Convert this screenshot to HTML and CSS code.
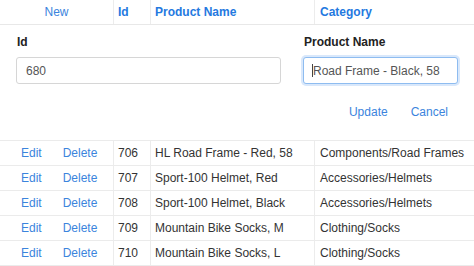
FILE: index.html
```html
<!DOCTYPE html>
<html>
<head>
<meta charset="utf-8">
<link rel="stylesheet" href="styles.css">
</head>
<body>
<div class="grid">
  <div class="row head">
    <div class="cell c1 center"><a class="link">New</a></div>
    <div class="cell c2"><b class="hlink">Id</b></div>
    <div class="cell c3"><b class="hlink">Product Name</b></div>
    <div class="cell c4"><b class="hlink">Category</b></div>
  </div>
  <div class="editor">
    <div class="fields">
      <div class="field">
        <label class="label">Id</label>
        <input class="input" value="680">
      </div>
      <div class="field">
        <label class="label">Product Name</label>
        <div class="input-wrap">
          <input class="input focus" value="Road Frame - Black, 58">
          <span class="caret"></span>
        </div>
      </div>
    </div>
    <div class="actions">
      <a class="link btn">Update</a>
      <a class="link btn">Cancel</a>
    </div>
  </div>
  <div class="body">
    <div class="row">
      <div class="cell c1 acts"><a class="link">Edit</a><a class="link">Delete</a></div>
      <div class="cell c2">706</div>
      <div class="cell c3">HL Road Frame - Red, 58</div>
      <div class="cell c4">Components/Road Frames</div>
    </div>
    <div class="row">
      <div class="cell c1 acts"><a class="link">Edit</a><a class="link">Delete</a></div>
      <div class="cell c2">707</div>
      <div class="cell c3">Sport-100 Helmet, Red</div>
      <div class="cell c4">Accessories/Helmets</div>
    </div>
    <div class="row">
      <div class="cell c1 acts"><a class="link">Edit</a><a class="link">Delete</a></div>
      <div class="cell c2">708</div>
      <div class="cell c3">Sport-100 Helmet, Black</div>
      <div class="cell c4">Accessories/Helmets</div>
    </div>
    <div class="row">
      <div class="cell c1 acts"><a class="link">Edit</a><a class="link">Delete</a></div>
      <div class="cell c2">709</div>
      <div class="cell c3">Mountain Bike Socks, M</div>
      <div class="cell c4">Clothing/Socks</div>
    </div>
    <div class="row">
      <div class="cell c1 acts"><a class="link">Edit</a><a class="link">Delete</a></div>
      <div class="cell c2">710</div>
      <div class="cell c3">Mountain Bike Socks, L</div>
      <div class="cell c4">Clothing/Socks</div>
    </div>
  </div>
</div>
</body>
</html>
```
FILE: styles.css
```css
html, body {
  margin: 0;
  padding: 0;
  background: #fff;
}
body {
  font-family: "Liberation Sans", Arial, sans-serif;
  font-size: 12px;
  color: #333;
  width: 474px;
  height: 266px;
  overflow: hidden;
}
.row {
  display: grid;
  grid-template-columns: 113px 37px 164px 1fr;
  height: 25px;
  border-bottom: 1px solid #ebebeb;
  box-sizing: border-box;
}
.row.head {
  border-bottom: 1px solid #e8e8e8;
}
.cell {
  display: flex;
  align-items: center;
  padding-left: 4px;
  border-left: 1px solid #ececec;
  box-sizing: border-box;
  white-space: nowrap;
}
.cell.c1 {
  border-left: none;
  padding-left: 0;
}
.center {
  justify-content: center;
}
.cell.c4 {
  padding-left: 5px;
}
.link {
  color: #3b84dd;
  text-decoration: none;
}
.hlink {
  color: #2479e0;
  font-weight: bold;
}
.cell.c1.acts {
  padding-left: 21px;
  gap: 21px;
}
.editor {
  height: 115px;
  box-sizing: border-box;
  padding: 10px 0 0 16px;
}
.fields {
  display: grid;
  grid-template-columns: 265px 155px;
  column-gap: 22px;
}
.field {
  display: flex;
  flex-direction: column;
}
.label {
  font-weight: bold;
  color: #222;
  height: 14px;
  line-height: 14px;
  margin-left: 1px;
  margin-bottom: 8px;
}
.input-wrap {
  position: relative;
  display: flex;
  flex-direction: column;
}
.input {
  font-family: "Liberation Sans", Arial, sans-serif;
  font-size: 12px;
  color: #555;
  height: 27px;
  box-sizing: border-box;
  border: 1px solid #d6d6d6;
  border-radius: 3px;
  padding: 0 9px;
  margin: 0;
  outline: none;
  background: #fff;
}
.input.focus {
  border-color: #8ebcf0;
  box-shadow: 0 0 0 2px #d9e8fb;
}
.caret {
  position: absolute;
  left: 9px;
  top: 7px;
  width: 1px;
  height: 13px;
  background: #444;
}
.actions {
  display: flex;
  justify-content: flex-end;
  gap: 23px;
  padding-right: 26px;
  margin-top: 21px;
}
.body {
  border-top: 1px solid #ebebeb;
}
```
